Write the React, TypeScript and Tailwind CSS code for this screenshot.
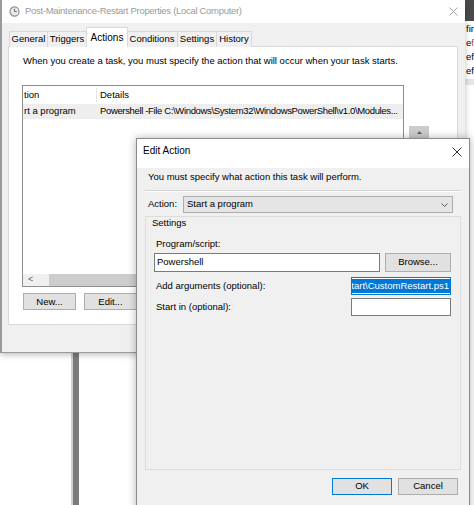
import React from "react";

const font = { fontFamily: '"Liberation Sans", Arial, sans-serif' };

const tabs = [
  { name: "General", w: "w-[39px]" },
  { name: "Triggers", w: "w-[40px] -ml-[1px]" },
  { name: "Actions", w: "w-[42px] -mx-[1px]", active: true },
  { name: "Conditions", w: "w-[52px] -ml-[1px]" },
  { name: "Settings", w: "w-[40px] -ml-[1px]" },
  { name: "History", w: "w-[36px] -ml-[1px]" },
];

const CloseX = ({ size, color }: { size: number; color: string }) => (
  <svg width={size} height={size} viewBox="0 0 10 10">
    <path d="M0.5 0.5 L9.5 9.5 M9.5 0.5 L0.5 9.5" stroke={color} strokeWidth="1" fill="none" />
  </svg>
);

const ClockIcon = () => (
  <svg width="11" height="11" viewBox="0 0 12 12">
    <circle cx="6" cy="6" r="5" fill="#e8e8e8" stroke="#8c8c8c" strokeWidth="1.2" />
    <path d="M6 3 V6 H8.5" stroke="#7a7a7a" strokeWidth="1.2" fill="none" />
  </svg>
);

function PropertiesWindow() {
  return (
    <div className="absolute left-0 top-0 w-[465px] h-[353px] flex flex-col border-l-2 border-b border-[#9a9a9a] shadow-[0_2px_6px_rgba(0,0,0,0.25)]">
      <div className="h-[23px] bg-white flex items-center pl-[7px] pr-[6px] shrink-0">
        <ClockIcon />
        <span className="ml-[5px] text-[9.5px] tracking-[-0.3px] text-[#9b9b9b]">
          Post-Maintenance-Restart Properties (Local Computer)
        </span>
        <span className="ml-auto mr-[1px]">
          <CloseX size={9} color="#9b9b9b" />
        </span>
      </div>
      <div className="flex-1 bg-[#f0f0f0] pt-[4px] pl-[6px] pr-[7px]">
        <div className="flex items-end h-[20px] pl-[1px]">
          {tabs.map((t) =>
            t.active ? (
              <div
                key={t.name}
                className={`${t.w} h-[20px] bg-white border border-b-0 border-[#d9d9d9] relative z-10 flex items-center justify-center text-[10px] text-black`}
              >
                {t.name}
              </div>
            ) : (
              <div
                key={t.name}
                className={`${t.w} h-[16px] bg-[#f0f0f0] border border-b-0 border-[#d9d9d9] flex items-center justify-center text-[9.5px] text-black`}
              >
                {t.name}
              </div>
            )
          )}
        </div>
        <div className="-mt-[1px] h-[279px] bg-white border border-[#d9d9d9] pl-[13px] pt-[8px]">
          <div className="h-[12px] leading-[12px] text-[9.5px] text-black ml-[1px]">
            When you create a task, you must specify the action that will occur when your task starts.
          </div>
          <div className="flex mt-[18px]">
            <div className="w-[382px] h-[202px] border border-[#8e8e8e] flex flex-col text-[9.5px] text-black overflow-hidden">
              <div className="h-[16px] flex items-center shrink-0 pt-[2px]">
                <div className="w-[74px] shrink-0 pl-[1px] h-full flex items-center border-r border-[#e5e5e5]">tion</div>
                <div className="pl-[3px]">Details</div>
              </div>
              <div className="h-[15px] mt-[2px] bg-[#eeeeee] flex items-center shrink-0">
                <div className="w-[74px] shrink-0 pl-[1px]">rt a program</div>
                <div className="pl-[3px] whitespace-nowrap tracking-[-0.35px]">
                  Powershell -File C:\Windows\System32\WindowsPowerShell\v1.0\Modules...
                </div>
              </div>
              <div className="flex-1" />
              <div className="h-[12px] flex shrink-0">
                <div className="w-[26px] bg-[#f0f0f0] flex items-center pl-[5px] text-[9px] text-[#606060]">&lt;</div>
                <div className="w-[220px] bg-[#cdcdcd]" />
                <div className="flex-1 bg-[#f0f0f0]" />
              </div>
            </div>
            <div className="ml-[5px] mt-[41px] w-[20px] h-[13px] bg-[#cccccc] flex items-center justify-center">
              <svg width="5" height="3" viewBox="0 0 5 3">
                <path d="M0 3 L2.5 0 L5 3 Z" fill="#606060" />
              </svg>
            </div>
          </div>
          <div className="flex gap-[8px] mt-[6px] ml-[1px]">
            <div className="w-[53px] h-[17px] pt-[1px] bg-[#e1e1e1] border border-[#adadad] flex items-center justify-center text-[9.5px] text-black">
              New...
            </div>
            <div className="w-[53px] h-[17px] pt-[1px] bg-[#e1e1e1] border border-[#adadad] flex items-center justify-center text-[9.5px] text-black">
              Edit...
            </div>
          </div>
        </div>
      </div>
    </div>
  );
}

function EditActionDialog() {
  return (
    <div className="absolute left-[136px] top-[138px] w-[334px] h-[380px] flex flex-col border border-[#8a8a8a] shadow-[0_0_8px_rgba(0,0,0,0.3)]">
      <div className="h-[29px] bg-white flex items-start pt-[6px] pl-[6px] pr-[7px] shrink-0">
        <span className="text-[10px] leading-[12px] text-black">Edit Action</span>
        <span className="ml-auto mt-[2px]">
          <CloseX size={10} color="#333333" />
        </span>
      </div>
      <div className="flex-1 bg-[#f0f0f0] px-[8px] pt-[2px] text-[9.5px] text-black">
        <div className="h-[12px] leading-[12px] pl-[3px] mt-[1px]">
          You must specify what action this task will perform.
        </div>
        <div className="mt-[7px] h-[2px] border-t border-[#d4d4d4] border-b border-b-white" />
        <div className="flex items-center mt-[4px] pl-[3px]">
          <span className="w-[35px]">Action:</span>
          <div className="w-[270px] h-[17px] bg-[#e5e5e5] border border-[#acacac] flex items-center pl-[3px] pr-[4px]">
            <span>Start a program</span>
            <svg className="ml-auto" width="7" height="4" viewBox="0 0 7 4">
              <path d="M0.5 0.5 L3.5 3.5 L6.5 0.5" stroke="#555555" strokeWidth="1" fill="none" />
            </svg>
          </div>
        </div>
        <div className="mt-[3px] h-[254px] border border-[#dcdcdc] pl-[6px] pr-[9px]">
          <div className="h-[12px] leading-[12px]">Settings</div>
          <div className="h-[12px] leading-[12px] mt-[9px] pl-[4px]">Program/script:</div>
          <div className="flex mt-[3px] pl-[2px]">
            <div className="w-[226px] h-[19px] bg-white border border-[#7a7a7a] flex items-center pl-[2px]">
              Powershell
            </div>
            <div className="ml-[5px] w-[66px] h-[19px] bg-[#e1e1e1] border border-[#adadad] flex items-center justify-center">
              Browse...
            </div>
          </div>
          <div className="flex items-center mt-[5px] h-[18px] pl-[4px]">
            <span>Add arguments (optional):</span>
            <div className="ml-auto w-[100px] h-[18px] bg-white border border-[#0078d7] flex items-center justify-end overflow-hidden">
              <span className="bg-[#0078d7] text-white whitespace-nowrap pr-[1px] leading-[14px]">
                -Restart\CustomRestart.ps1
              </span>
            </div>
          </div>
          <div className="flex items-center mt-[3px] h-[18px] pl-[4px]">
            <span>Start in (optional):</span>
            <div className="ml-auto w-[100px] h-[18px] bg-white border border-[#7a7a7a]" />
          </div>
        </div>
        <div className="flex justify-end gap-[6px] mt-[8px] pr-[3px]">
          <div className="w-[60px] h-[17px] bg-[#e1e1e1] border border-[#0078d7] flex items-center justify-center">
            OK
          </div>
          <div className="w-[60px] h-[17px] bg-[#e1e1e1] border border-[#adadad] flex items-center justify-center">
            Cancel
          </div>
        </div>
      </div>
    </div>
  );
}

export default function App() {
  return (
    <div className="relative w-[474px] h-[505px] overflow-hidden bg-white" style={font}>
      {/* window behind, on the right */}
      <div className="absolute left-[463px] top-0 w-[20px] h-[505px] bg-white border-l border-[#c8c8c8] text-[9.5px] text-black">
        <div className="h-[21px] bg-[#4a4a4a]" />
        <div className="pl-[2px] leading-[14px] mt-[1px]">fir</div>
        <div className="pl-[2px] leading-[14px]">
          e<span className="text-[#c0392b]">f</span>
        </div>
        <div className="pl-[2px] leading-[14px]">ef</div>
        <div className="pl-[2px] leading-[14px]">ef</div>
        <div className="h-[6px] bg-[#e6e6e6] mt-[1px]" />
      </div>
      {/* vertical bar below the window */}
      <div className="absolute left-[71px] top-[352px] w-[8px] h-[153px] flex">
        <div className="w-[2px] bg-[#d0d0d0]" />
        <div className="w-[6px] bg-[#7c7c7c]" />
      </div>
      <PropertiesWindow />
      <EditActionDialog />
    </div>
  );
}
